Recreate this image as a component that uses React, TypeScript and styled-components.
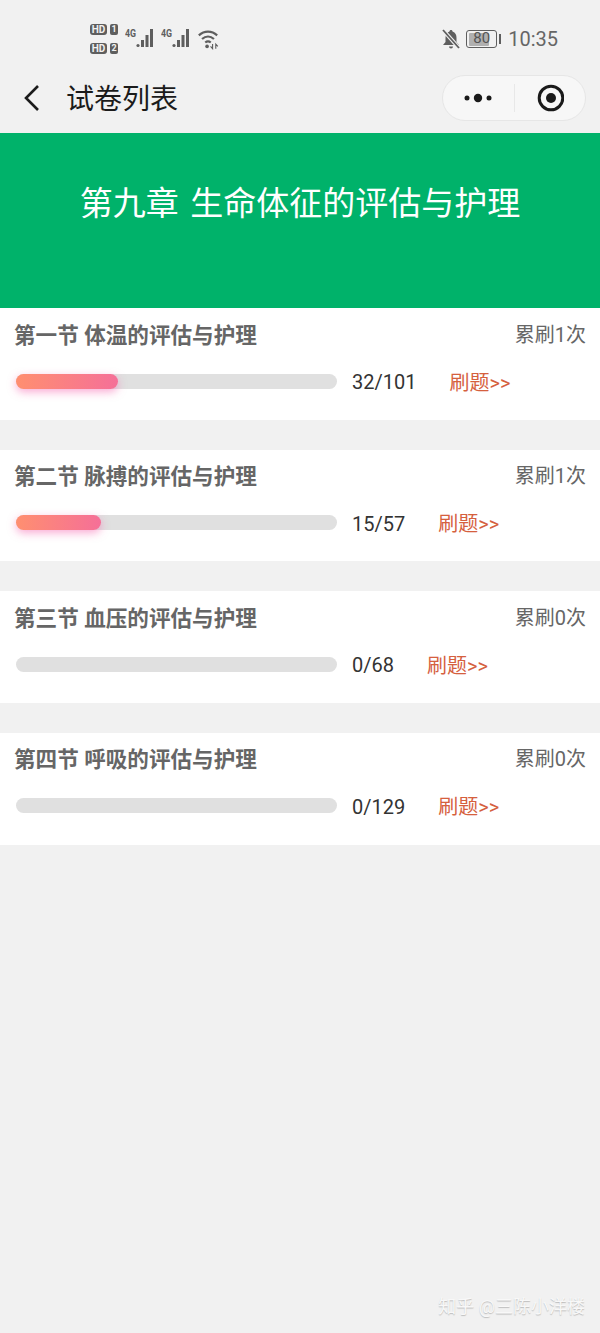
import React from "react";
import styled, { createGlobalStyle } from "styled-components";

const GlobalStyle = createGlobalStyle`
  html, body {
    margin: 0;
    padding: 0;
    background: #f1f1f1;
  }
  body {
    font-family: "Roboto", "Noto Sans CJK SC", sans-serif;
  }
`;

const Page = styled.div`
  width: 600px;
  height: 1333px;
  display: flex;
  flex-direction: column;
  background: #f1f1f1;
  position: relative;
  overflow: hidden;
`;

const StatusBar = styled.div`
  height: 70px;
  box-sizing: border-box;
  padding: 8px 42px 0 90px;
  display: flex;
  align-items: center;
  justify-content: space-between;
  color: #5e5e5e;
`;

const StatusGroup = styled.div`
  display: flex;
  align-items: center;
`;

const SimColumn = styled.div`
  display: flex;
  flex-direction: column;
  gap: 8px;
  margin-right: 7px;
`;

const SimRow = styled.div`
  display: flex;
  gap: 3px;
`;

const HdBadge = styled.span`
  width: 17px;
  height: 11px;
  border-radius: 3px;
  background: #5e5e5e;
  color: #f1f1f1;
  font: 700 10px/11px "Roboto", sans-serif;
  text-align: center;
`;

const SimBadge = styled.span`
  width: 8px;
  height: 11px;
  border-radius: 2px;
  background: #5e5e5e;
  color: #f1f1f1;
  font: 700 9px/11px "Roboto", sans-serif;
  text-align: center;
`;

const SignalWrap = styled.div`
  display: flex;
  align-items: flex-start;
  margin-right: 5px;
  height: 20px;
  margin-top: -3px;
`;

const NetLabel = styled.span`
  font: 700 11px/12px "Roboto", sans-serif;
  transform: scaleX(0.8);
  transform-origin: left;
  width: 11px;
  margin-top: 0;
`;

const Clock = styled.span`
  font-size: 20px;
  line-height: 24px;
  color: #666;
  margin-left: 7px;
`;

const Battery = styled.div`
  display: flex;
  align-items: center;
  margin-left: 5px;
`;

const BatteryBody = styled.div`
  width: 31px;
  height: 18px;
  box-sizing: border-box;
  border: 1.5px solid #5e5e5e;
  border-radius: 3px;
  padding: 1.5px;
  position: relative;
  display: flex;
`;

const BatteryLevel = styled.div`
  width: 80%;
  background: #b0b0b0;
  border-radius: 1px;
`;

const BatteryText = styled.span`
  position: absolute;
  left: 0;
  right: 0;
  top: 0;
  text-align: center;
  font-size: 15px;
  line-height: 15px;
  color: #555;
`;

const BatteryTip = styled.div`
  width: 2px;
  height: 10px;
  background: #5e5e5e;
  margin-left: 2px;
`;

const NavBar = styled.div`
  height: 63px;
  box-sizing: border-box;
  padding: 0 14px 0 23px;
  display: flex;
  align-items: center;
`;

const BackIcon = styled.svg`
  width: 18px;
  height: 28px;
  margin-right: 25px;
  margin-top: -7px;
`;

const NavTitle = styled.h1`
  flex: 1;
  margin: -9px 0 0;
  font-size: 28px;
  line-height: 36px;
  font-weight: 400;
  color: #1b1b1b;
  font-family: "Noto Sans CJK SC", sans-serif;
`;

const Capsule = styled.div`
  width: 144px;
  height: 46px;
  box-sizing: border-box;
  margin-top: -7px;
  border-radius: 23px;
  background: #f7f7f7;
  border: 1px solid #e6e6e6;
  display: flex;
  align-items: center;
`;

const CapsuleSide = styled.div`
  flex: 1;
  display: flex;
  align-items: center;
  justify-content: center;
`;

const CapsuleDivider = styled.div`
  width: 1px;
  height: 28px;
  background: #e8e8e8;
`;

const Banner = styled.div`
  height: 175px;
  box-sizing: border-box;
  padding-top: 44px;
  background: #00b26a;
  color: #fff;
  font-size: 33px;
  line-height: 48px;
  word-spacing: 4px;
  text-align: center;
  font-family: "Noto Sans CJK SC", sans-serif;
`;

const SectionList = styled.div`
  display: flex;
  flex-direction: column;
  gap: 30px;
`;

const Card = styled.div`
  height: 111.67px;
  box-sizing: border-box;
  padding: 10px 14px 0;
  background: #fff;
`;

const CardHead = styled.div`
  display: flex;
  justify-content: space-between;
  align-items: center;
  height: 30px;
`;

const SectionTitle = styled.span`
  font-size: 21.6px;
  font-weight: 700;
  color: #666;
`;

const Repeat = styled.span`
  font-size: 20px;
  color: #666;
`;

const ProgressRow = styled.div`
  display: flex;
  align-items: center;
  margin-top: 19px;
  padding-left: 2px;
  height: 30px;
`;

const Track = styled.div`
  width: 321px;
  height: 15px;
  margin-top: -2px;
  border-radius: 8px;
  background: #e0e0e0;
  margin-right: 15px;
`;

const Fill = styled.div`
  height: 100%;
  border-radius: 8px;
  background: linear-gradient(90deg, #ff8f70, #f56f98);
  box-shadow: 0 3px 8px rgba(246, 90, 170, 0.5);
`;

const Count = styled.span`
  font-size: 20px;
  color: #333;
  margin-right: 33px;
`;

const Action = styled.span`
  font-size: 20px;
  margin-top: -2px;
  color: #d5603e;
`;

const Watermark = styled.div`
  position: absolute;
  right: 15px;
  bottom: 14px;
  font-size: 18px;
  line-height: 24px;
  color: #f8f8f8;
  text-shadow: 0 1px 1px rgba(0, 0, 0, 0.22);
`;

const Bars = () => (
  <svg width="20" height="20" viewBox="0 0 20 20">
    <circle cx="2" cy="17.5" r="1.6" fill="#5e5e5e" />
    <rect x="5" y="12" width="3" height="7" fill="#5e5e5e" />
    <rect x="9.5" y="7" width="3" height="12" fill="#5e5e5e" />
    <rect x="14" y="1" width="3" height="18" fill="#5e5e5e" />
  </svg>
);

const sections = [
  { title: "第一节 体温的评估与护理", times: 1, done: 32, total: 101, fill: 102 },
  { title: "第二节 脉搏的评估与护理", times: 1, done: 15, total: 57, fill: 85 },
  { title: "第三节 血压的评估与护理", times: 0, done: 0, total: 68, fill: 0 },
  { title: "第四节 呼吸的评估与护理", times: 0, done: 0, total: 129, fill: 0 },
];

export default function App() {
  return (
    <Page>
      <GlobalStyle />
      <StatusBar>
        <StatusGroup>
          <SimColumn>
            <SimRow>
              <HdBadge>HD</HdBadge>
              <SimBadge>1</SimBadge>
            </SimRow>
            <SimRow>
              <HdBadge>HD</HdBadge>
              <SimBadge>2</SimBadge>
            </SimRow>
          </SimColumn>
          <SignalWrap>
            <NetLabel>4G</NetLabel>
            <Bars />
          </SignalWrap>
          <SignalWrap>
            <NetLabel>4G</NetLabel>
            <Bars />
          </SignalWrap>
          <svg width="22" height="21" viewBox="0 0 24 22" fill="none" stroke="#5e5e5e" strokeWidth="2.4">
            <path d="M2 6.500C8 1 16 1 22 6.500" />
            <path d="M5.500 10.500C9.500 6.800 14.500 6.800 18.500 10.500" />
            <path d="M9 14.300C11 12.600 13 12.600 15 14.300" />
            <circle cx="11" cy="18.500" r="2" fill="#5e5e5e" stroke="none" />
            <path d="M17 16v5l-2.200-2.500M20.500 21v-5l2.200 2.500" strokeWidth="1.200" />
          </svg>
        </StatusGroup>
        <StatusGroup>
          <svg width="20" height="22" viewBox="0 0 20 22">
            <path d="M10 2c-1 0-1.500.7-1.500 1.500C5.500 4.500 4.500 7 4.500 10v4L2 17h16l-2.500-3v-4c0-3-1-5.500-4-6.500C11.500 2.700 11 2 10 2z" fill="#5e5e5e" />
            <path d="M8 18.500h4a2 2 0 0 1-4 0z" fill="#5e5e5e" />
            <path d="M2 2l16 18" stroke="#f1f1f1" strokeWidth="4" />
            <path d="M2 2l16 18" stroke="#5e5e5e" strokeWidth="1.800" />
          </svg>
          <Battery>
            <BatteryBody>
              <BatteryLevel />
              <BatteryText>80</BatteryText>
            </BatteryBody>
            <BatteryTip />
          </Battery>
          <Clock>10:35</Clock>
        </StatusGroup>
      </StatusBar>
      <NavBar>
        <BackIcon viewBox="0 0 18 28" fill="none" stroke="#1b1b1b" strokeWidth="2.600">
          <path d="M15 2L3 14l12 12" />
        </BackIcon>
        <NavTitle>试卷列表</NavTitle>
        <Capsule>
          <CapsuleSide>
            <svg width="32" height="12" viewBox="0 0 32 12" fill="#1a1a1a">
              <circle cx="5" cy="6" r="2.500" />
              <circle cx="16" cy="6" r="4.200" />
              <circle cx="27" cy="6" r="2.500" />
            </svg>
          </CapsuleSide>
          <CapsuleDivider />
          <CapsuleSide>
            <svg width="28" height="28" viewBox="0 0 28 28">
              <circle cx="15" cy="14" r="11.800" fill="none" stroke="#1a1a1a" strokeWidth="3" />
              <circle cx="15" cy="14" r="5" fill="#1a1a1a" />
            </svg>
          </CapsuleSide>
        </Capsule>
      </NavBar>
      <Banner>第九章 生命体征的评估与护理</Banner>
      <SectionList>
        {sections.map((section) => (
          <Card key={section.title}>
            <CardHead>
              <SectionTitle>{section.title}</SectionTitle>
              <Repeat>累刷{section.times}次</Repeat>
            </CardHead>
            <ProgressRow>
              <Track>
                {section.fill > 0 && <Fill style={{ width: section.fill }} />}
              </Track>
              <Count>
                {section.done}/{section.total}
              </Count>
              <Action>刷题&gt;&gt;</Action>
            </ProgressRow>
          </Card>
        ))}
      </SectionList>
      <Watermark>知乎 @三陈小洋楼</Watermark>
    </Page>
  );
}
